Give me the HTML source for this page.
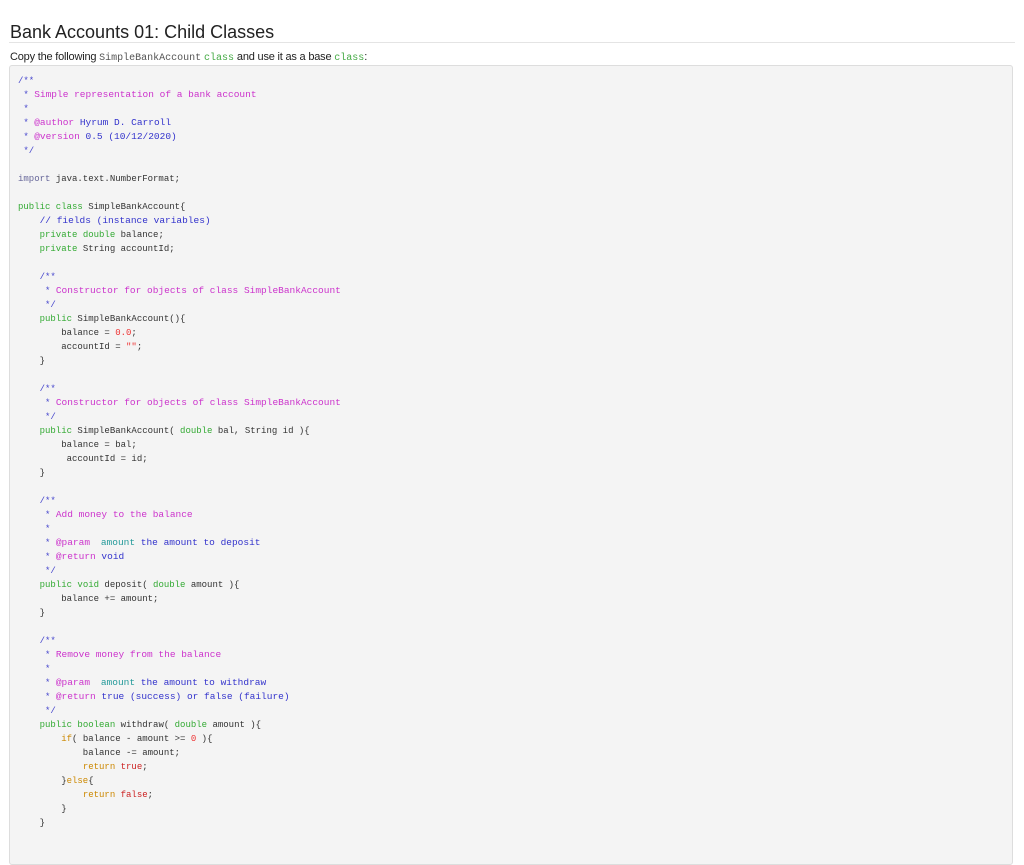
<!DOCTYPE html>
<html><head><meta charset="utf-8"><style>
body{margin:0;background:#fff;font-family:"Liberation Sans",sans-serif;width:1024px;height:840px;overflow:hidden}
h1{position:absolute;left:10px;top:20px;margin:0;font-weight:normal;font-size:18px;color:#222;line-height:24px}
.hr{position:absolute;left:9px;top:42px;width:1006px;height:1px;background:#e4e4e4}
p{position:absolute;left:10px;top:50px;margin:0;font-size:11px;color:#222;line-height:14px;letter-spacing:-0.2px}
p code{font-family:"Liberation Mono",monospace;font-size:10px;color:#555;letter-spacing:0}
p .k{color:#4a4}
pre{position:absolute;left:9px;top:65px;width:1004px;height:800px;margin:0;background:#f4f4f4;border:1px solid #ddd;border-radius:3px;box-sizing:border-box;padding:8px 8px;font-family:"Liberation Mono",monospace;font-size:9px;line-height:14px;color:#333}
.c{color:#44c}.m{color:#c3c;font-size:9.5px}.b{color:#33c;font-size:9.5px}.g{color:#3a3}.i{color:#669}.n{color:#e33}.o{color:#c80}.r{color:#c22}.t{color:#299;font-size:9.5px}
</style></head><body>
<h1>Bank Accounts 01: Child Classes</h1>
<div class="hr"></div>
<p>Copy the following <code>SimpleBankAccount</code> <code class="k">class</code> and use it as a base <code class="k">class</code>:</p>
<pre><span class="c">/**</span>
<span class="c"> * </span><span class="m">Simple representation of a bank account</span>
<span class="c"> *</span>
<span class="c"> * </span><span class="m">@author</span><span class="b"> Hyrum D. Carroll</span>
<span class="c"> * </span><span class="m">@version</span><span class="b"> 0.5 (10/12/2020)</span>
<span class="c"> */</span>

<span class="i">import</span> java.text.NumberFormat;

<span class="g">public class</span> SimpleBankAccount{
    <span class="b">// fields (instance variables)</span>
    <span class="g">private double</span> balance;
    <span class="g">private</span> String accountId;

    <span class="c">/**</span>
<span class="c">     * </span><span class="m">Constructor for objects of class SimpleBankAccount</span>
<span class="c">     */</span>
    <span class="g">public</span> SimpleBankAccount(){
        balance = <span class="n">0.0</span>;
        accountId = <span class="n">""</span>;
    }

    <span class="c">/**</span>
<span class="c">     * </span><span class="m">Constructor for objects of class SimpleBankAccount</span>
<span class="c">     */</span>
    <span class="g">public</span> SimpleBankAccount( <span class="g">double</span> bal, String id ){
        balance = bal;
         accountId = id;
    }

    <span class="c">/**</span>
<span class="c">     * </span><span class="m">Add money to the balance</span>
<span class="c">     *</span>
<span class="c">     * </span><span class="m">@param</span>  <span class="t">amount</span><span class="b"> the amount to deposit</span>
<span class="c">     * </span><span class="m">@return</span><span class="b"> void</span>
<span class="c">     */</span>
    <span class="g">public void</span> deposit( <span class="g">double</span> amount ){
        balance += amount;
    }

    <span class="c">/**</span>
<span class="c">     * </span><span class="m">Remove money from the balance</span>
<span class="c">     *</span>
<span class="c">     * </span><span class="m">@param</span>  <span class="t">amount</span><span class="b"> the amount to withdraw</span>
<span class="c">     * </span><span class="m">@return</span><span class="b"> true (success) or false (failure)</span>
<span class="c">     */</span>
    <span class="g">public boolean</span> withdraw( <span class="g">double</span> amount ){
        <span class="o">if</span>( balance - amount &gt;= <span class="n">0</span> ){
            balance -= amount;
            <span class="o">return</span> <span class="r">true</span>;
        }<span class="o">else</span>{
            <span class="o">return</span> <span class="r">false</span>;
        }
    }
</pre>
</body></html>
